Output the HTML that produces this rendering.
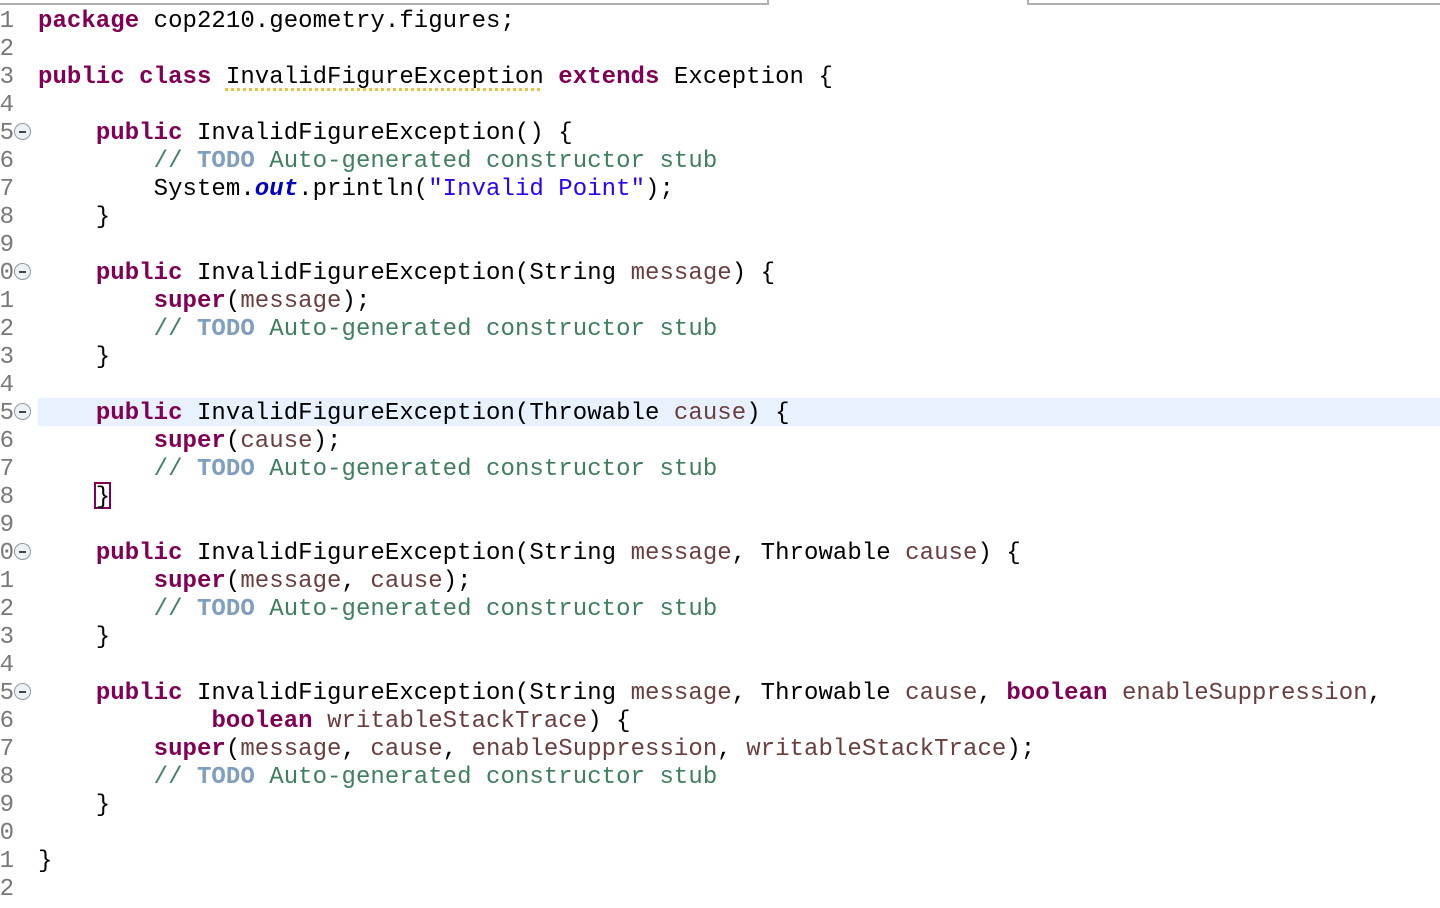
<!DOCTYPE html>
<html><head><meta charset="utf-8"><style>
html,body{margin:0;padding:0;background:#fff;width:1440px;height:908px;overflow:hidden;position:relative}
.top1{position:absolute;left:0;top:3px;width:769px;height:2px;background:#b0b0b0}
.top1v{position:absolute;left:767px;top:0;width:2px;height:5px;background:#b0b0b0}
.top2{position:absolute;left:1027px;top:3px;width:413px;height:2px;background:#b0b0b0}
.top2v{position:absolute;left:1027px;top:0;width:2px;height:5px;background:#b0b0b0}
.ln{position:absolute;left:-40px;width:54px;text-align:right;font:24px/28px "Liberation Mono",monospace;color:#787878}
.code{position:absolute;left:38px;font:24px/28px "Liberation Mono",monospace;color:#000;white-space:pre;letter-spacing:0.05px}
.k{color:#7F0055;font-weight:bold}
.v{color:#6A3E3E}
.c{color:#3F7F5F}
.t{color:#7F9FBF;font-weight:bold}
.s{color:#2A00FF}
.o{color:#0000C0;font-weight:bold;font-style:italic}
.hl{position:absolute;left:38px;top:398px;width:1402px;height:28px;background:#E8F2FE}
.fold{position:absolute;left:14px;width:17px;height:17px;border:1.5px solid #8e9aa6;border-radius:50%;background:#eef1f4;box-sizing:border-box}
.fold:after{content:"";position:absolute;left:3.5px;top:6.5px;width:7px;height:2px;background:#3c4650}
.sq{text-decoration:underline dotted #f0c040;text-underline-offset:5px;text-decoration-thickness:3px}
.box{position:absolute;left:94px;top:482px;width:17px;height:27px;border:2px solid #7F0055;box-sizing:border-box}
</style></head><body>
<div class="top1"></div><div class="top1v"></div><div class="top2"></div><div class="top2v"></div>
<div class="hl"></div>
<div class="box"></div>
<div class="ln" style="top:8px">1<br>2<br>3<br>4<br>5<br>6<br>7<br>8<br>9<br>10<br>11<br>12<br>13<br>14<br>15<br>16<br>17<br>18<br>19<br>20<br>21<br>22<br>23<br>24<br>25<br>26<br>27<br>28<br>29<br>30<br>31<br>32</div>
<div class="fold" style="top:123px"></div>
<div class="fold" style="top:263px"></div>
<div class="fold" style="top:403px"></div>
<div class="fold" style="top:543px"></div>
<div class="fold" style="top:683px"></div>
<div class="code" style="top:8px"><span class="k">package</span> cop2210.geometry.figures;

<span class="k">public</span> <span class="k">class</span> <span class="sq">InvalidFigureException</span> <span class="k">extends</span> Exception {

    <span class="k">public</span> InvalidFigureException() {
        <span class="c">// </span><span class="t">TODO</span><span class="c"> Auto-generated constructor stub</span>
        System.<span class="o">out</span>.println(<span class="s">"Invalid Point"</span>);
    }

    <span class="k">public</span> InvalidFigureException(String <span class="v">message</span>) {
        <span class="k">super</span>(<span class="v">message</span>);
        <span class="c">// </span><span class="t">TODO</span><span class="c"> Auto-generated constructor stub</span>
    }

    <span class="k">public</span> InvalidFigureException(Throwable <span class="v">cause</span>) {
        <span class="k">super</span>(<span class="v">cause</span>);
        <span class="c">// </span><span class="t">TODO</span><span class="c"> Auto-generated constructor stub</span>
    }

    <span class="k">public</span> InvalidFigureException(String <span class="v">message</span>, Throwable <span class="v">cause</span>) {
        <span class="k">super</span>(<span class="v">message</span>, <span class="v">cause</span>);
        <span class="c">// </span><span class="t">TODO</span><span class="c"> Auto-generated constructor stub</span>
    }

    <span class="k">public</span> InvalidFigureException(String <span class="v">message</span>, Throwable <span class="v">cause</span>, <span class="k">boolean</span> <span class="v">enableSuppression</span>,
            <span class="k">boolean</span> <span class="v">writableStackTrace</span>) {
        <span class="k">super</span>(<span class="v">message</span>, <span class="v">cause</span>, <span class="v">enableSuppression</span>, <span class="v">writableStackTrace</span>);
        <span class="c">// </span><span class="t">TODO</span><span class="c"> Auto-generated constructor stub</span>
    }

}
</div>
</body></html>
